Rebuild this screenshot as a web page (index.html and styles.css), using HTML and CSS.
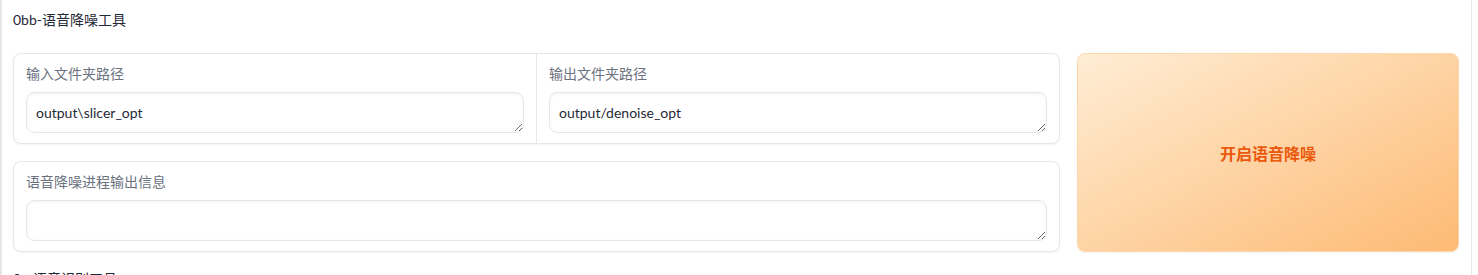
FILE: index.html
```html
<!DOCTYPE html>
<html lang="zh-CN">
  <head>
    <meta charset="UTF-8" />
    <meta name="viewport" content="width=device-width, initial-scale=1.0" />
    <title>0bb-语音降噪工具</title>
    <link rel="stylesheet" href="styles.css">
  </head>
  <body>
    <div class="tab-panel">
      <p class="section-title">0bb-语音降噪工具</p>

      <div class="row">
        <div class="left-col">
          <div class="block split">
            <label class="field">
              <span class="field-label">输入文件夹路径</span>
              <textarea class="field-input" rows="1">output\slicer_opt</textarea>
            </label>
            <label class="field">
              <span class="field-label">输出文件夹路径</span>
              <textarea class="field-input" rows="1">output/denoise_opt</textarea>
            </label>
          </div>

          <div class="block">
            <label class="field">
              <span class="field-label">语音降噪进程输出信息</span>
              <textarea class="field-input" rows="1"></textarea>
            </label>
          </div>
        </div>

        <button class="primary-btn">开启语音降噪</button>
      </div>

      <p class="section-title next">0c-语音识别工具</p>
    </div>
  </body>
</html>
```

FILE: styles.css
```css
body {
  margin: 0;
  background: #fff;
  font-family: "Lato", "Noto Sans CJK SC", sans-serif;
  font-size: 14px;
  color: #1f2937;
}

.tab-panel {
  width: 1472px;
  box-sizing: border-box;
  border-left: 2px solid #e5e7eb;
  border-right: 1px solid #e5e7eb;
  padding: 10px 12px 0 11px;
  min-height: 275px;
}

.section-title {
  margin: 0;
  line-height: 20px;
  font-size: 14px;
  color: #1f2937;
}

.section-title.next {
  margin-top: 17px;
  padding-left: 0;
}

.row {
  display: flex;
  gap: 17px;
  margin-top: 23px;
}

/* 왼쪽 입력 영역 */
.left-col {
  display: flex;
  flex-direction: column;
  gap: 17px;
  width: 1047px;
}

.block {
  display: flex;
  border: 1px solid #e5e7eb;
  border-radius: 8px;
  background: #fff;
  box-shadow: 0 1px 2px rgba(0, 0, 0, 0.05);
  overflow: hidden;
}

.split .field + .field {
  border-left: 1px solid #e5e7eb;
}

.field {
  flex: 1;
  display: flex;
  flex-direction: column;
  padding: 10px 12px 10px 12px;
}

.field-label {
  line-height: 20px;
  color: #6b7280;
  margin-bottom: 8px;
}

.field-input {
  box-sizing: border-box;
  height: 41px;
  width: 100%;
  padding: 10px 9px 9px;
  border: 1px solid #e5e7eb;
  border-radius: 8px;
  box-shadow: inset 0 1px 3px rgba(0, 0, 0, 0.06);
  font-family: "Lato", "Noto Sans CJK SC", sans-serif;
  font-size: 14px;
  line-height: 20px;
  color: #1f2937;
  background: #fff;
  resize: vertical;
  outline: none;
}

/* 오른쪽 버튼 */
.primary-btn {
  flex: 1;
  border: 1px solid #fed7aa;
  border-radius: 8px;
  background: linear-gradient(to bottom right, #ffedd5, #fdba74);
  color: #ea580c;
  font-family: "Lato", "Noto Sans CJK SC", sans-serif;
  font-size: 16px;
  font-weight: 600;
  box-shadow: 0 1px 2px rgba(0, 0, 0, 0.05);
  cursor: pointer;
}
```
